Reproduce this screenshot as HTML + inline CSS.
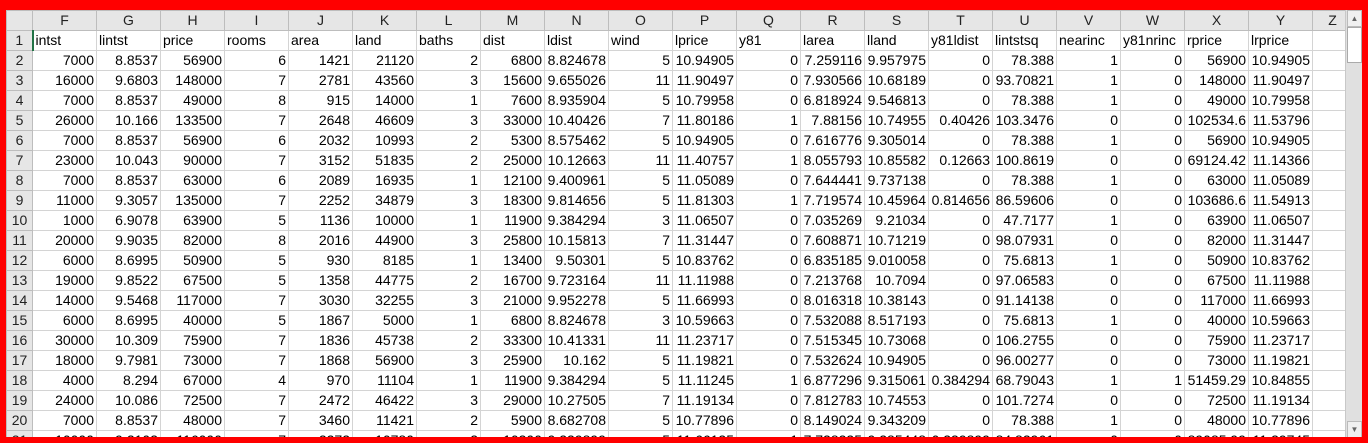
<!DOCTYPE html>
<html><head><meta charset="utf-8"><style>
html,body{margin:0;padding:0;width:1368px;height:443px;overflow:hidden;background:#f00;}
#wrap{position:absolute;left:6px;top:10px;width:1356px;height:427px;background:#fff;overflow:hidden;}
table{border-collapse:collapse;table-layout:fixed;width:1346px;font-family:"Liberation Sans",Arial,sans-serif;font-size:14px;color:#000;position:absolute;left:0;top:0;}
td{height:19px;border:1px solid #d4d4d4;padding:0 2px;white-space:nowrap;overflow:hidden;text-align:right;line-height:19px;}
td.t{text-align:left;}
tr.h td{background:#e6e6e6;text-align:center;border-color:#bdbdbd;color:#222;}
td.r{background:#e6e6e6;text-align:center;border-color:#bdbdbd;color:#222;}
#sb{position:absolute;left:1339px;top:0;width:17px;height:428px;background:#e0e0e0;border-left:1px solid #c8c8c8;}
#sb .a{position:absolute;left:1px;width:15px;height:17px;background:#f0f0f0;border:1px solid #bbb;box-sizing:border-box;}
#sb .th{position:absolute;left:1px;top:17px;width:15px;height:36px;background:#fff;border:1px solid #aaa;box-sizing:border-box;}
</style></head><body><div id="wrap">
<table>
<colgroup><col style="width:26px"><col span="20" style="width:64px"><col style="width:40px"></colgroup>
<tr class="h"><td style="background:#e6e6e6"></td><td>F</td><td>G</td><td>H</td><td>I</td><td>J</td><td>K</td><td>L</td><td>M</td><td>N</td><td>O</td><td>P</td><td>Q</td><td>R</td><td>S</td><td>T</td><td>U</td><td>V</td><td>W</td><td>X</td><td>Y</td><td>Z</td></tr>
<tr><td class="r">1</td><td class="t" style="border-left:2px solid #217346">intst</td><td class="t">lintst</td><td class="t">price</td><td class="t">rooms</td><td class="t">area</td><td class="t">land</td><td class="t">baths</td><td class="t">dist</td><td class="t">ldist</td><td class="t">wind</td><td class="t">lprice</td><td class="t">y81</td><td class="t">larea</td><td class="t">lland</td><td class="t">y81ldist</td><td class="t">lintstsq</td><td class="t">nearinc</td><td class="t">y81nrinc</td><td class="t">rprice</td><td class="t">lrprice</td><td></td></tr>
<tr><td class="r">2</td><td>7000</td><td>8.8537</td><td>56900</td><td>6</td><td>1421</td><td>21120</td><td>2</td><td>6800</td><td>8.824678</td><td>5</td><td>10.94905</td><td>0</td><td>7.259116</td><td>9.957975</td><td>0</td><td>78.388</td><td>1</td><td>0</td><td>56900</td><td>10.94905</td><td></td></tr>
<tr><td class="r">3</td><td>16000</td><td>9.6803</td><td>148000</td><td>7</td><td>2781</td><td>43560</td><td>3</td><td>15600</td><td>9.655026</td><td>11</td><td>11.90497</td><td>0</td><td>7.930566</td><td>10.68189</td><td>0</td><td>93.70821</td><td>1</td><td>0</td><td>148000</td><td>11.90497</td><td></td></tr>
<tr><td class="r">4</td><td>7000</td><td>8.8537</td><td>49000</td><td>8</td><td>915</td><td>14000</td><td>1</td><td>7600</td><td>8.935904</td><td>5</td><td>10.79958</td><td>0</td><td>6.818924</td><td>9.546813</td><td>0</td><td>78.388</td><td>1</td><td>0</td><td>49000</td><td>10.79958</td><td></td></tr>
<tr><td class="r">5</td><td>26000</td><td>10.166</td><td>133500</td><td>7</td><td>2648</td><td>46609</td><td>3</td><td>33000</td><td>10.40426</td><td>7</td><td>11.80186</td><td>1</td><td>7.88156</td><td>10.74955</td><td>0.40426</td><td>103.3476</td><td>0</td><td>0</td><td>102534.6</td><td>11.53796</td><td></td></tr>
<tr><td class="r">6</td><td>7000</td><td>8.8537</td><td>56900</td><td>6</td><td>2032</td><td>10993</td><td>2</td><td>5300</td><td>8.575462</td><td>5</td><td>10.94905</td><td>0</td><td>7.616776</td><td>9.305014</td><td>0</td><td>78.388</td><td>1</td><td>0</td><td>56900</td><td>10.94905</td><td></td></tr>
<tr><td class="r">7</td><td>23000</td><td>10.043</td><td>90000</td><td>7</td><td>3152</td><td>51835</td><td>2</td><td>25000</td><td>10.12663</td><td>11</td><td>11.40757</td><td>1</td><td>8.055793</td><td>10.85582</td><td>0.12663</td><td>100.8619</td><td>0</td><td>0</td><td>69124.42</td><td>11.14366</td><td></td></tr>
<tr><td class="r">8</td><td>7000</td><td>8.8537</td><td>63000</td><td>6</td><td>2089</td><td>16935</td><td>1</td><td>12100</td><td>9.400961</td><td>5</td><td>11.05089</td><td>0</td><td>7.644441</td><td>9.737138</td><td>0</td><td>78.388</td><td>1</td><td>0</td><td>63000</td><td>11.05089</td><td></td></tr>
<tr><td class="r">9</td><td>11000</td><td>9.3057</td><td>135000</td><td>7</td><td>2252</td><td>34879</td><td>3</td><td>18300</td><td>9.814656</td><td>5</td><td>11.81303</td><td>1</td><td>7.719574</td><td>10.45964</td><td>0.814656</td><td>86.59606</td><td>0</td><td>0</td><td>103686.6</td><td>11.54913</td><td></td></tr>
<tr><td class="r">10</td><td>1000</td><td>6.9078</td><td>63900</td><td>5</td><td>1136</td><td>10000</td><td>1</td><td>11900</td><td>9.384294</td><td>3</td><td>11.06507</td><td>0</td><td>7.035269</td><td>9.21034</td><td>0</td><td>47.7177</td><td>1</td><td>0</td><td>63900</td><td>11.06507</td><td></td></tr>
<tr><td class="r">11</td><td>20000</td><td>9.9035</td><td>82000</td><td>8</td><td>2016</td><td>44900</td><td>3</td><td>25800</td><td>10.15813</td><td>7</td><td>11.31447</td><td>0</td><td>7.608871</td><td>10.71219</td><td>0</td><td>98.07931</td><td>0</td><td>0</td><td>82000</td><td>11.31447</td><td></td></tr>
<tr><td class="r">12</td><td>6000</td><td>8.6995</td><td>50900</td><td>5</td><td>930</td><td>8185</td><td>1</td><td>13400</td><td>9.50301</td><td>5</td><td>10.83762</td><td>0</td><td>6.835185</td><td>9.010058</td><td>0</td><td>75.6813</td><td>1</td><td>0</td><td>50900</td><td>10.83762</td><td></td></tr>
<tr><td class="r">13</td><td>19000</td><td>9.8522</td><td>67500</td><td>5</td><td>1358</td><td>44775</td><td>2</td><td>16700</td><td>9.723164</td><td>11</td><td>11.11988</td><td>0</td><td>7.213768</td><td>10.7094</td><td>0</td><td>97.06583</td><td>0</td><td>0</td><td>67500</td><td>11.11988</td><td></td></tr>
<tr><td class="r">14</td><td>14000</td><td>9.5468</td><td>117000</td><td>7</td><td>3030</td><td>32255</td><td>3</td><td>21000</td><td>9.952278</td><td>5</td><td>11.66993</td><td>0</td><td>8.016318</td><td>10.38143</td><td>0</td><td>91.14138</td><td>0</td><td>0</td><td>117000</td><td>11.66993</td><td></td></tr>
<tr><td class="r">15</td><td>6000</td><td>8.6995</td><td>40000</td><td>5</td><td>1867</td><td>5000</td><td>1</td><td>6800</td><td>8.824678</td><td>3</td><td>10.59663</td><td>0</td><td>7.532088</td><td>8.517193</td><td>0</td><td>75.6813</td><td>1</td><td>0</td><td>40000</td><td>10.59663</td><td></td></tr>
<tr><td class="r">16</td><td>30000</td><td>10.309</td><td>75900</td><td>7</td><td>1836</td><td>45738</td><td>2</td><td>33300</td><td>10.41331</td><td>11</td><td>11.23717</td><td>0</td><td>7.515345</td><td>10.73068</td><td>0</td><td>106.2755</td><td>0</td><td>0</td><td>75900</td><td>11.23717</td><td></td></tr>
<tr><td class="r">17</td><td>18000</td><td>9.7981</td><td>73000</td><td>7</td><td>1868</td><td>56900</td><td>3</td><td>25900</td><td>10.162</td><td>5</td><td>11.19821</td><td>0</td><td>7.532624</td><td>10.94905</td><td>0</td><td>96.00277</td><td>0</td><td>0</td><td>73000</td><td>11.19821</td><td></td></tr>
<tr><td class="r">18</td><td>4000</td><td>8.294</td><td>67000</td><td>4</td><td>970</td><td>11104</td><td>1</td><td>11900</td><td>9.384294</td><td>5</td><td>11.11245</td><td>1</td><td>6.877296</td><td>9.315061</td><td>0.384294</td><td>68.79043</td><td>1</td><td>1</td><td>51459.29</td><td>10.84855</td><td></td></tr>
<tr><td class="r">19</td><td>24000</td><td>10.086</td><td>72500</td><td>7</td><td>2472</td><td>46422</td><td>3</td><td>29000</td><td>10.27505</td><td>7</td><td>11.19134</td><td>0</td><td>7.812783</td><td>10.74553</td><td>0</td><td>101.7274</td><td>0</td><td>0</td><td>72500</td><td>11.19134</td><td></td></tr>
<tr><td class="r">20</td><td>7000</td><td>8.8537</td><td>48000</td><td>7</td><td>3460</td><td>11421</td><td>2</td><td>5900</td><td>8.682708</td><td>5</td><td>10.77896</td><td>0</td><td>8.149024</td><td>9.343209</td><td>0</td><td>78.388</td><td>1</td><td>0</td><td>48000</td><td>10.77896</td><td></td></tr>
<tr><td class="r">21</td><td>10000</td><td>9.2103</td><td>116000</td><td>7</td><td>2272</td><td>10780</td><td>2</td><td>10300</td><td>9.239899</td><td>5</td><td>11.66135</td><td>1</td><td>7.728235</td><td>9.285448</td><td>0.239899</td><td>84.82961</td><td>0</td><td>0</td><td>89085.99</td><td>11.39745</td><td></td></tr>
</table>
<div id="sb"><div class="a" style="top:0;text-align:center;font-size:8px;line-height:15px;color:#666">▲</div><div class="th"></div><div class="a" style="bottom:0;text-align:center;font-size:8px;line-height:15px;color:#666">▼</div></div>
</div></body></html>
